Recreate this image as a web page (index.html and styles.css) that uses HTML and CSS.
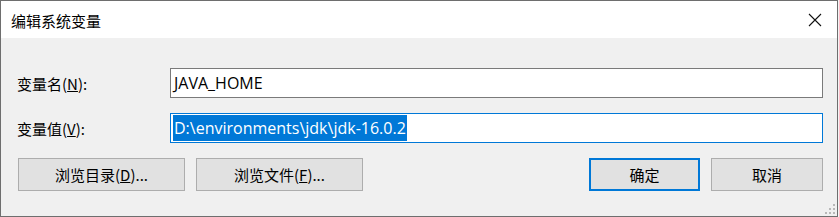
FILE: index.html
```html
<!DOCTYPE html>
<html lang="zh-CN">
  <head>
    <meta charset="UTF-8" />
    <meta name="viewport" content="width=device-width, initial-scale=1.0" />
    <title>编辑系统变量</title>

    <link rel="stylesheet" href="styles.css">
  </head>
  <body>
    <div class="dialog">
      <div class="titleBar">
        <span class="title">编辑系统变量</span>
        <span class="close">
          <svg width="14" height="14" viewBox="0 0 14 14">
            <path d="M1 1 L13 13 M13 1 L1 13" stroke="#111" stroke-width="1.1" fill="none" />
          </svg>
        </span>
      </div>

      <div class="content">
        <div class="formRow">
          <label class="label">变量名(<u>N</u>):</label>
          <div class="field">JAVA_HOME</div>
        </div>
        <div class="formRow">
          <label class="label">变量值(<u>V</u>):</label>
          <div class="field focused"><span class="selected">D:\environments\jdk\jdk-16.0.2</span></div>
        </div>

        <div class="buttons">
          <div class="leftButtons">
            <button class="btn wide">浏览目录(<u>D</u>)...</button>
            <button class="btn wide">浏览文件(<u>F</u>)...</button>
          </div>
          <div class="rightButtons">
            <button class="btn default">确定</button>
            <button class="btn">取消</button>
          </div>
        </div>

        <div class="grip">
          <i></i><i></i><i></i><i></i><i></i><i></i>
        </div>
      </div>
    </div>
  </body>
</html>
```

FILE: styles.css
```css
html {
  background: #f4f4f4;
}
body {
  margin: 0;
  font-family: "Noto Sans", "Noto Sans CJK SC", sans-serif;
  font-size: 15px;
  color: #000;
}
.dialog {
  width: 836px;
  height: 215px;
  border: 1px solid #6e6e6e;
  background: #f0f0f0;
  display: flex;
  flex-direction: column;
}
.titleBar {
  height: 37px;
  background: #fff;
  display: flex;
  align-items: center;
  justify-content: space-between;
  padding: 1px 14px 0 10px;
  box-sizing: border-box;
}
.title {
  font-family: "Noto Sans CJK SC", sans-serif;
  font-size: 15px;
}
.close {
  display: flex;
  width: 14px;
  height: 14px;
  margin-right: 1px;
}
.content {
  position: relative;
  flex: 1;
  padding: 30px 14px 0 16px;
}
.formRow {
  display: flex;
  align-items: center;
  margin-bottom: 15px;
}
.label {
  width: 153px;
  font-family: "Noto Sans CJK SC", sans-serif;
}
.field {
  flex: 1;
  height: 30px;
  box-sizing: border-box;
  border: 1px solid #7a7a7a;
  background: #fff;
  display: flex;
  align-items: center;
  padding-left: 3px;
  font-family: "Open Sans", sans-serif;
  font-size: 16px;
}
.field.focused {
  border-color: #0078d7;
  padding-left: 2px;
}
.selected {
  background: #0078d7;
  color: #fff;
  height: 26px;
  line-height: 26px;
  padding: 0 1px;
}
.buttons {
  display: flex;
  justify-content: space-between;
  margin-top: 6px;
  padding-left: 1px;
}
.leftButtons,
.rightButtons {
  display: flex;
  gap: 11px;
}
.btn {
  height: 33px;
  width: 112px;
  font-family: "Noto Sans CJK SC", sans-serif;
  font-size: 15px;
  background: #e1e1e1;
  border: 1px solid #adadad;
  color: #000;
  padding: 0;
}
.btn.wide {
  width: 167px;
}
.btn.default {
  width: 111px;
  border: 2px solid #0078d7;
}
.grip {
  position: absolute;
  right: 2px;
  bottom: 2px;
  width: 12px;
  height: 12px;
}
.grip i {
  position: absolute;
  width: 2px;
  height: 2px;
  background: #b8b8b8;
}
.grip i:nth-child(1) { right: 0; bottom: 0; }
.grip i:nth-child(2) { right: 4px; bottom: 0; }
.grip i:nth-child(3) { right: 8px; bottom: 0; }
.grip i:nth-child(4) { right: 0; bottom: 4px; }
.grip i:nth-child(5) { right: 4px; bottom: 4px; }
.grip i:nth-child(6) { right: 0; bottom: 8px; }
```
